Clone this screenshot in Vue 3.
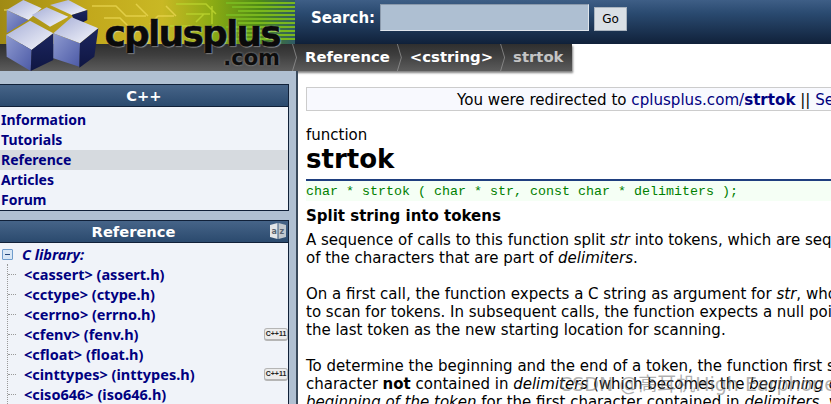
<script setup>
const menu = ['Information', 'Tutorials', 'Reference', 'Articles', 'Forum']
const libs = [
  { t: '<cassert> (assert.h)' },
  { t: '<cctype> (ctype.h)' },
  { t: '<cerrno> (errno.h)' },
  { t: '<cfenv> (fenv.h)', badge: true },
  { t: '<cfloat> (float.h)' },
  { t: '<cinttypes> (inttypes.h)', badge: true },
  { t: '<ciso646> (iso646.h)' }
]
const streaks = [3, 7, 11, 15, 19, 23, 27, 31, 35, 39]
</script>

<template>
  <div class="page">
    <header class="top">
      <div class="banner">
        <svg class="traces" width="295" height="44" viewBox="0 0 295 44">
          <g fill="none" stroke="#e8d650" stroke-width="1.5" opacity=".8">
            <path d="M4 10h24M12 24l12-10M92 6h24l10 10h20M104 18h16l8 8M136 4l12 12M150 24l8-8h16M166 6l10 10" />
          </g>
          <g fill="none" stroke="#b9d22e" stroke-width="1.5" opacity=".9">
            <path d="M176 4h30l10 10M186 14h24M196 22l8-8M170 26h20M212 6v18" />
          </g>
          <g fill="none" stroke="#79b71e" stroke-width="2">
            <path v-for="y in streaks" :key="y" :d="`M${226 + (y % 3) * 6} ${y}H295`" />
          </g>
        </svg>
      </div>
      <form class="search" @submit.prevent>
        <label class="search-label">Search:</label>
        <input class="search-input" />
        <button class="go">Go</button>
      </form>
    </header>

    <nav class="crumbs">
      <span class="crumb-spacer"></span>
      <span class="crumb">Reference</span>
      <span class="crumb">&lt;cstring&gt;</span>
      <span class="crumb current">strtok</span>
    </nav>

    <div class="logo">
      <svg width="100" height="72" viewBox="0 0 300 216">
        <defs>
          <linearGradient id="topf" x1="0" y1="0" x2="1" y2="1"><stop offset="0" stop-color="#a5add6"/><stop offset="1" stop-color="#f6f7fc"/></linearGradient>
          <linearGradient id="leftf" x1="0" y1="0" x2="1" y2="1"><stop offset="0" stop-color="#8e9ad0"/><stop offset="1" stop-color="#4c5aa6"/></linearGradient>
          <linearGradient id="rightf" x1="0" y1="0" x2="0" y2="1"><stop offset="0" stop-color="#1c2660"/><stop offset="1" stop-color="#0f1642"/></linearGradient>
        </defs>
        <path d="M20 30 70 0l55 25-40 35z" fill="url(#topf)"/>
        <path d="M20 30l65 30-65 40z" fill="url(#leftf)"/>
        <path d="M150 15 205 0l57 30-47 15z" fill="url(#topf)"/>
        <path d="M215 45l47-15v30l-30 16z" fill="url(#rightf)"/>
        <path d="M95 45l45-23 65 28-55 30z" fill="url(#topf)"/>
        <path d="M90 62l-72 43 77 45 65-50z" fill="url(#topf)"/>
        <path d="M18 105l77 45-3 63-72-43z" fill="url(#leftf)"/>
        <path d="M95 150l65-50v80l-68 33z" fill="url(#rightf)"/>
        <path d="M215 52l-55 48 80 30 55-45z" fill="url(#topf)"/>
        <path d="M160 100l80 30-2 70-78-25z" fill="url(#leftf)"/>
        <path d="M240 130l55-45-12 85-45 33z" fill="url(#rightf)"/>
      </svg>
      <div class="wordmark">
        <span class="word-main">cplusplus</span>
        <span class="word-com">.com</span>
      </div>
    </div>

    <div class="body">
      <aside class="side">
        <section class="box">
          <h3 class="box-title">C++</h3>
          <ul class="menu">
            <li v-for="m in menu" :key="m" :class="{ active: m === 'Reference' }">{{ m }}</li>
          </ul>
        </section>
        <section class="box">
          <h3 class="box-title has-icon">
            Reference
            <svg class="az" width="18" height="18" viewBox="0 0 18 18">
              <path d="M1 3l7.500-2v16L1 15z" fill="#e4e6e8"/>
              <path d="M9.500 1L17 3v12l-7.500 2z" fill="#c2c8ce"/>
              <text x="2.500" y="12" font-size="8" fill="#5a6470" font-family="DejaVu Sans">a</text>
              <text x="10.500" y="12" font-size="8" fill="#5a6470" font-family="DejaVu Sans">z</text>
            </svg>
          </h3>
          <div class="tree">
            <div class="tree-head">
              <span class="minus"></span>
              <em>C library:</em>
            </div>
            <ul class="libs">
              <li v-for="l in libs" :key="l.t">
                <span class="dash"></span>
                <span class="lib">{{ l.t }}</span>
                <span v-if="l.badge" class="badge">C++11</span>
              </li>
            </ul>
          </div>
        </section>
      </aside>

      <main class="content">
        <div class="redirect">You were redirected to <a>cplusplus.com/<b>strtok</b></a> || <a>See</a> the reference</div>
        <div class="kind">function</div>
        <h1 class="title">strtok</h1>
        <div class="proto">char * strtok ( char * str, const char * delimiters );</div>
        <h2 class="sub">Split string into tokens</h2>
        <p>A sequence of calls to this function split <i>str</i> into tokens, which are sequences of<br />of the characters that are part of <i>delimiters</i>.</p>
        <p>On a first call, the function expects a C string as argument for <i>str</i>, whose first<br />to scan for tokens. In subsequent calls, the function expects a null pointer and uses<br />the last token as the new starting location for scanning.</p>
        <p>To determine the beginning and the end of a token, the function first scans from<br />character <b>not</b> contained in <i>delimiters</i> (which becomes the <i>beginning of the token</i>)<br /><i>beginning of the token</i> for the first character contained in <i>delimiters</i>, which</p>
      </main>
    </div>

    <div class="watermark">CSDN @高耳机High Earphone</div>
  </div>
</template>

<style scoped>
.page {
  position: relative;
  width: 831px;
  height: 404px;
  overflow: hidden;
  background: #fff;
  font-family: "DejaVu Sans", Verdana, "Noto Sans CJK SC", sans-serif;
  color: #000;
}
.top {
  display: flex;
  height: 44px;
  background: linear-gradient(#3e5e86, #2a4a70 30%, #10213a);
}
.banner {
  width: 295px;
  height: 44px;
  flex: none;
  background: linear-gradient(90deg, #a08a14 0, #c2a81c 30%, #c9b824 55%, #8cab14 72%, #4d8a16 88%, #2f5a66 100%);
}
.traces { display: block; }
.search {
  display: flex;
  align-items: center;
  margin-left: 16px;
  height: 35px;
}
.search-label {
  width: 69px;
  color: #fff;
  font-size: 15px;
  font-weight: bold;
}
.search-input {
  width: 209px;
  height: 27px;
  box-sizing: border-box;
  border: 1px solid #8a99ac;
  border-right-color: #dfe5ec;
  border-bottom-color: #dfe5ec;
  background: #aebfd2;
  padding: 0;
}
.go {
  margin: 3px 0 0 5px;
  width: 33px;
  height: 24px;
  padding: 0;
  border: 1px solid #aab4bf;
  background: #d9dfe5;
  font: 12px "DejaVu Sans", sans-serif;
  color: #000;
}
.crumbs {
  display: flex;
  width: 572px;
  height: 27px;
  background: linear-gradient(#2f2f2f, #3e3e3e 40%, #5c5c5c);
  box-shadow: 1px 2px 2px rgba(0, 0, 0, .5);
  font-size: 14.85px;
  font-weight: bold;
  color: #fff;
  align-items: flex-start;
}
.crumb-spacer { width: 293px; flex: none; }
.crumb {
  position: relative;
  padding: 0 8px 0 12px;
  line-height: 26px;
  height: 27px;
  white-space: nowrap;
}
.crumb::before {
  content: "";
  position: absolute;
  left: -1px;
  top: 0;
  width: 5px;
  height: 27px;
  background: linear-gradient(#777, #888);
  clip-path: polygon(0 0, 20% 0, 100% 50%, 20% 100%, 0 100%, 80% 50%);
}
.crumb.current { color: #c4c4c4; }
.logo {
  position: absolute;
  left: 0;
  top: 0;
  display: flex;
  pointer-events: none;
}
.wordmark {
  display: flex;
  flex-direction: column;
  align-items: flex-end;
  width: 176px;
  margin-left: 4px;
}
.word-main {
  margin-top: 14px;
  font: bold 36px/40px "DejaVu Sans", sans-serif;
  letter-spacing: -1.8px;
  color: #0a0a0a;
  -webkit-text-stroke: .6px #0a0a0a;
  text-shadow: 0 0 1px #fff, 1px 1px 1px rgba(255,255,255,.45);
  white-space: nowrap;
}
.word-com {
  margin-top: -8px;
  font: bold 21px/24px "DejaVu Sans", sans-serif;
  color: #0d0d0d;
  -webkit-text-stroke: .3px #0d0d0d;
  text-shadow: 0 0 2px rgba(255,255,255,.7);
}
.body {
  display: flex;
  height: 333px;
}
.side {
  width: 298px;
  flex: none;
  box-sizing: border-box;
  background: #b0c0d2;
  border-right: 2px solid #3a4a5c;
  padding: 13px 7px 0 0;
  overflow: hidden;
}
.box {
  margin-bottom: 9px;
  background: #f0f3f9;
  border: 1px solid #102038;
  border-left: 0;
}
.box-title {
  margin: 0;
  height: 21px;
  line-height: 21px;
  text-align: center;
  color: #fff;
  font-size: 14.67px;
  font-weight: bold;
  background: linear-gradient(#466488, #2b4a6e);
  border-bottom: 1px solid #102038;
  position: relative;
}
.box-title.has-icon { padding-right: 21px; }
.az {
  position: absolute;
  right: 1px;
  top: 1px;
}
.menu, .libs {
  list-style: none;
  margin: 0;
  padding: 0;
}
.menu { padding-top: 3px; }
.menu li {
  height: 20px;
  line-height: 20px;
  padding-left: 1px;
  font-family: "Noto Sans", sans-serif;
  font-size: 14px;
  font-weight: bold;
  color: #000080;
}
.menu li.active { background: #d6dadf; }
.tree {
  padding-top: 1px;
  font-family: "Noto Sans", sans-serif;
  font-size: 14.5px;
  font-weight: bold;
  color: #000080;
}
.tree-head {
  display: flex;
  align-items: center;
  height: 20px;
}
.tree-head em { margin-left: 9px; }
.minus {
  position: relative;
  width: 9px;
  height: 9px;
  margin-left: 2px;
  flex: none;
  border: 1px solid #6f9ccc;
  background: #d8e6f5;
  border-radius: 1px;
}
.minus::after {
  content: "";
  position: absolute;
  left: 2px;
  right: 2px;
  top: 4px;
  height: 1px;
  background: #23457a;
}
.libs {
  margin-left: 7px;
  border-left: 1px dotted #999;
}
.libs li {
  display: flex;
  align-items: center;
  height: 20px;
  line-height: 20px;
}
.dash {
  width: 8px;
  margin-right: 8px;
  border-top: 1px dotted #999;
  flex: none;
}
.lib { flex: 1; white-space: nowrap; }
.badge {
  width: 24px;
  height: 13px;
  box-sizing: border-box;
  border: 1px solid #b5b5b5;
  border-bottom-width: 2px;
  border-radius: 3px;
  background: #ececec;
  font: bold 7px/10px "Liberation Sans", sans-serif;
  color: #222;
  text-align: center;
}
.content {
  flex: 1;
  min-width: 0;
  padding: 16px 0 0 8px;
  overflow: hidden;
  font-size: 15px;
  line-height: 18px;
  white-space: nowrap;
}
.content a { color: #000080; }
.redirect {
  height: 24px;
  box-sizing: border-box;
  margin-right: -40px;
  padding-left: 150px;
  border: 1px solid #ccc;
  background: #f8f9fe;
  font-size: 15.1px;
  line-height: 25px;
}
.kind {
  margin-top: 14px;
  line-height: 20px;
}
.title {
  margin: -1px 0 0;
  font-size: 26px;
  line-height: 30px;
  font-weight: bold;
}
.proto {
  margin-top: 5px;
  height: 17px;
  padding-top: 3px;
  border-top: 2px solid #1f3f7f;
  background: #f5fff5;
  color: #008000;
  font: 13.33px/15px "Liberation Mono", monospace;
}
.sub {
  margin: 5px 0 5px;
  font-size: 15px;
  line-height: 20px;
  font-weight: bold;
}
p { margin: 0 0 18px; }
.watermark {
  position: absolute;
  left: 559px;
  top: 374px;
  font-size: 19px;
  line-height: 20px;
  color: rgba(110, 110, 110, .55);
  white-space: nowrap;
}
</style>
